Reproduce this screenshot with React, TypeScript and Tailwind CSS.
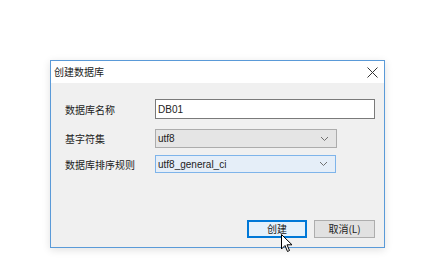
import React from "react";

const cjk = { fontFamily: '"Noto Sans CJK SC", "Microsoft YaHei", sans-serif' };
const lat = { fontFamily: '"Liberation Sans", "Noto Sans CJK SC", sans-serif' };

function Chevron() {
  return (
    <svg width="9" height="6" viewBox="0 0 9 6" className="shrink-0">
      <path d="M1 1 L4.5 4.5 L8 1" fill="none" stroke="#707070" strokeWidth="1" />
    </svg>
  );
}

export default function App() {
  return (
    <div className="w-[443px] h-[261px] bg-white pt-[60px] pl-[50px] relative overflow-hidden" style={cjk}>
      <div className="w-[335px] h-[188px] border border-[#5a9ad8] flex flex-col shadow-[0_2px_8px_rgba(0,0,0,0.12)]">
        <div className="h-[22px] bg-white flex items-center justify-between pl-[3px] pr-[6px]">
          <span className="text-[10px] text-[#222] leading-none">创建数据库</span>
          <svg width="11" height="11" viewBox="0 0 11 11">
            <path d="M0.5 0.5 L10.5 10.5 M10.5 0.5 L0.5 10.5" stroke="#333" strokeWidth="1" />
          </svg>
        </div>
        <div className="flex-1 bg-[#f0f0f0] flex flex-col pl-[14px] pr-[9px] pt-[16px] pb-[9px]">
          <div className="flex items-center h-[20px]">
            <span className="w-[90px] text-[10px] text-[#222]">数据库名称</span>
            <div className="flex-1 h-[20px] bg-white border border-[#7a7a7a] flex items-center px-[2px]">
              <span className="text-[10px] text-[#222]" style={lat}>DB01</span>
            </div>
          </div>
          <div className="flex items-center h-[19px] mt-[10px]">
            <span className="w-[90px] text-[10px] text-[#222]">基字符集</span>
            <div className="w-[182px] h-[19px] bg-[#e5e5e5] border border-[#acacac] flex items-center justify-between pl-[2px] pr-[7px]">
              <span className="text-[10px] text-[#222]" style={lat}>utf8</span>
              <Chevron />
            </div>
          </div>
          <div className="flex items-center h-[18px] mt-[7px]">
            <span className="w-[90px] text-[10px] text-[#222]">数据库排序规则</span>
            <div className="w-[181px] h-[18px] bg-[#e5eef8] border border-[#7eb4ea] flex items-center justify-between pl-[2px] pr-[7px]">
              <span className="text-[10px] text-[#222]" style={lat}>utf8_general_ci</span>
              <Chevron />
            </div>
          </div>
          <div className="flex-1" />
          <div className="flex justify-end gap-[7px]">
            <div className="w-[60px] h-[18px] bg-[#e5f1fb] border-2 border-[#0078d7] flex items-center justify-center">
              <span className="text-[10px] text-[#222] leading-none">创建</span>
            </div>
            <div className="w-[61px] h-[18px] bg-[#e1e1e1] border border-[#adadad] flex items-center justify-center">
              <span className="text-[10px] text-[#222] leading-none">取消(L)</span>
            </div>
          </div>
        </div>
      </div>
      <svg className="absolute left-[281px] top-[234px]" width="12" height="19" viewBox="0 0 12 19">
        <path d="M0.5 0.5 L0.5 15 L4 11.5 L6.5 17.5 L8.5 16.5 L6 10.8 L11 10.8 Z" fill="#fff" stroke="#000" strokeWidth="1" strokeLinejoin="round" />
      </svg>
    </div>
  );
}
